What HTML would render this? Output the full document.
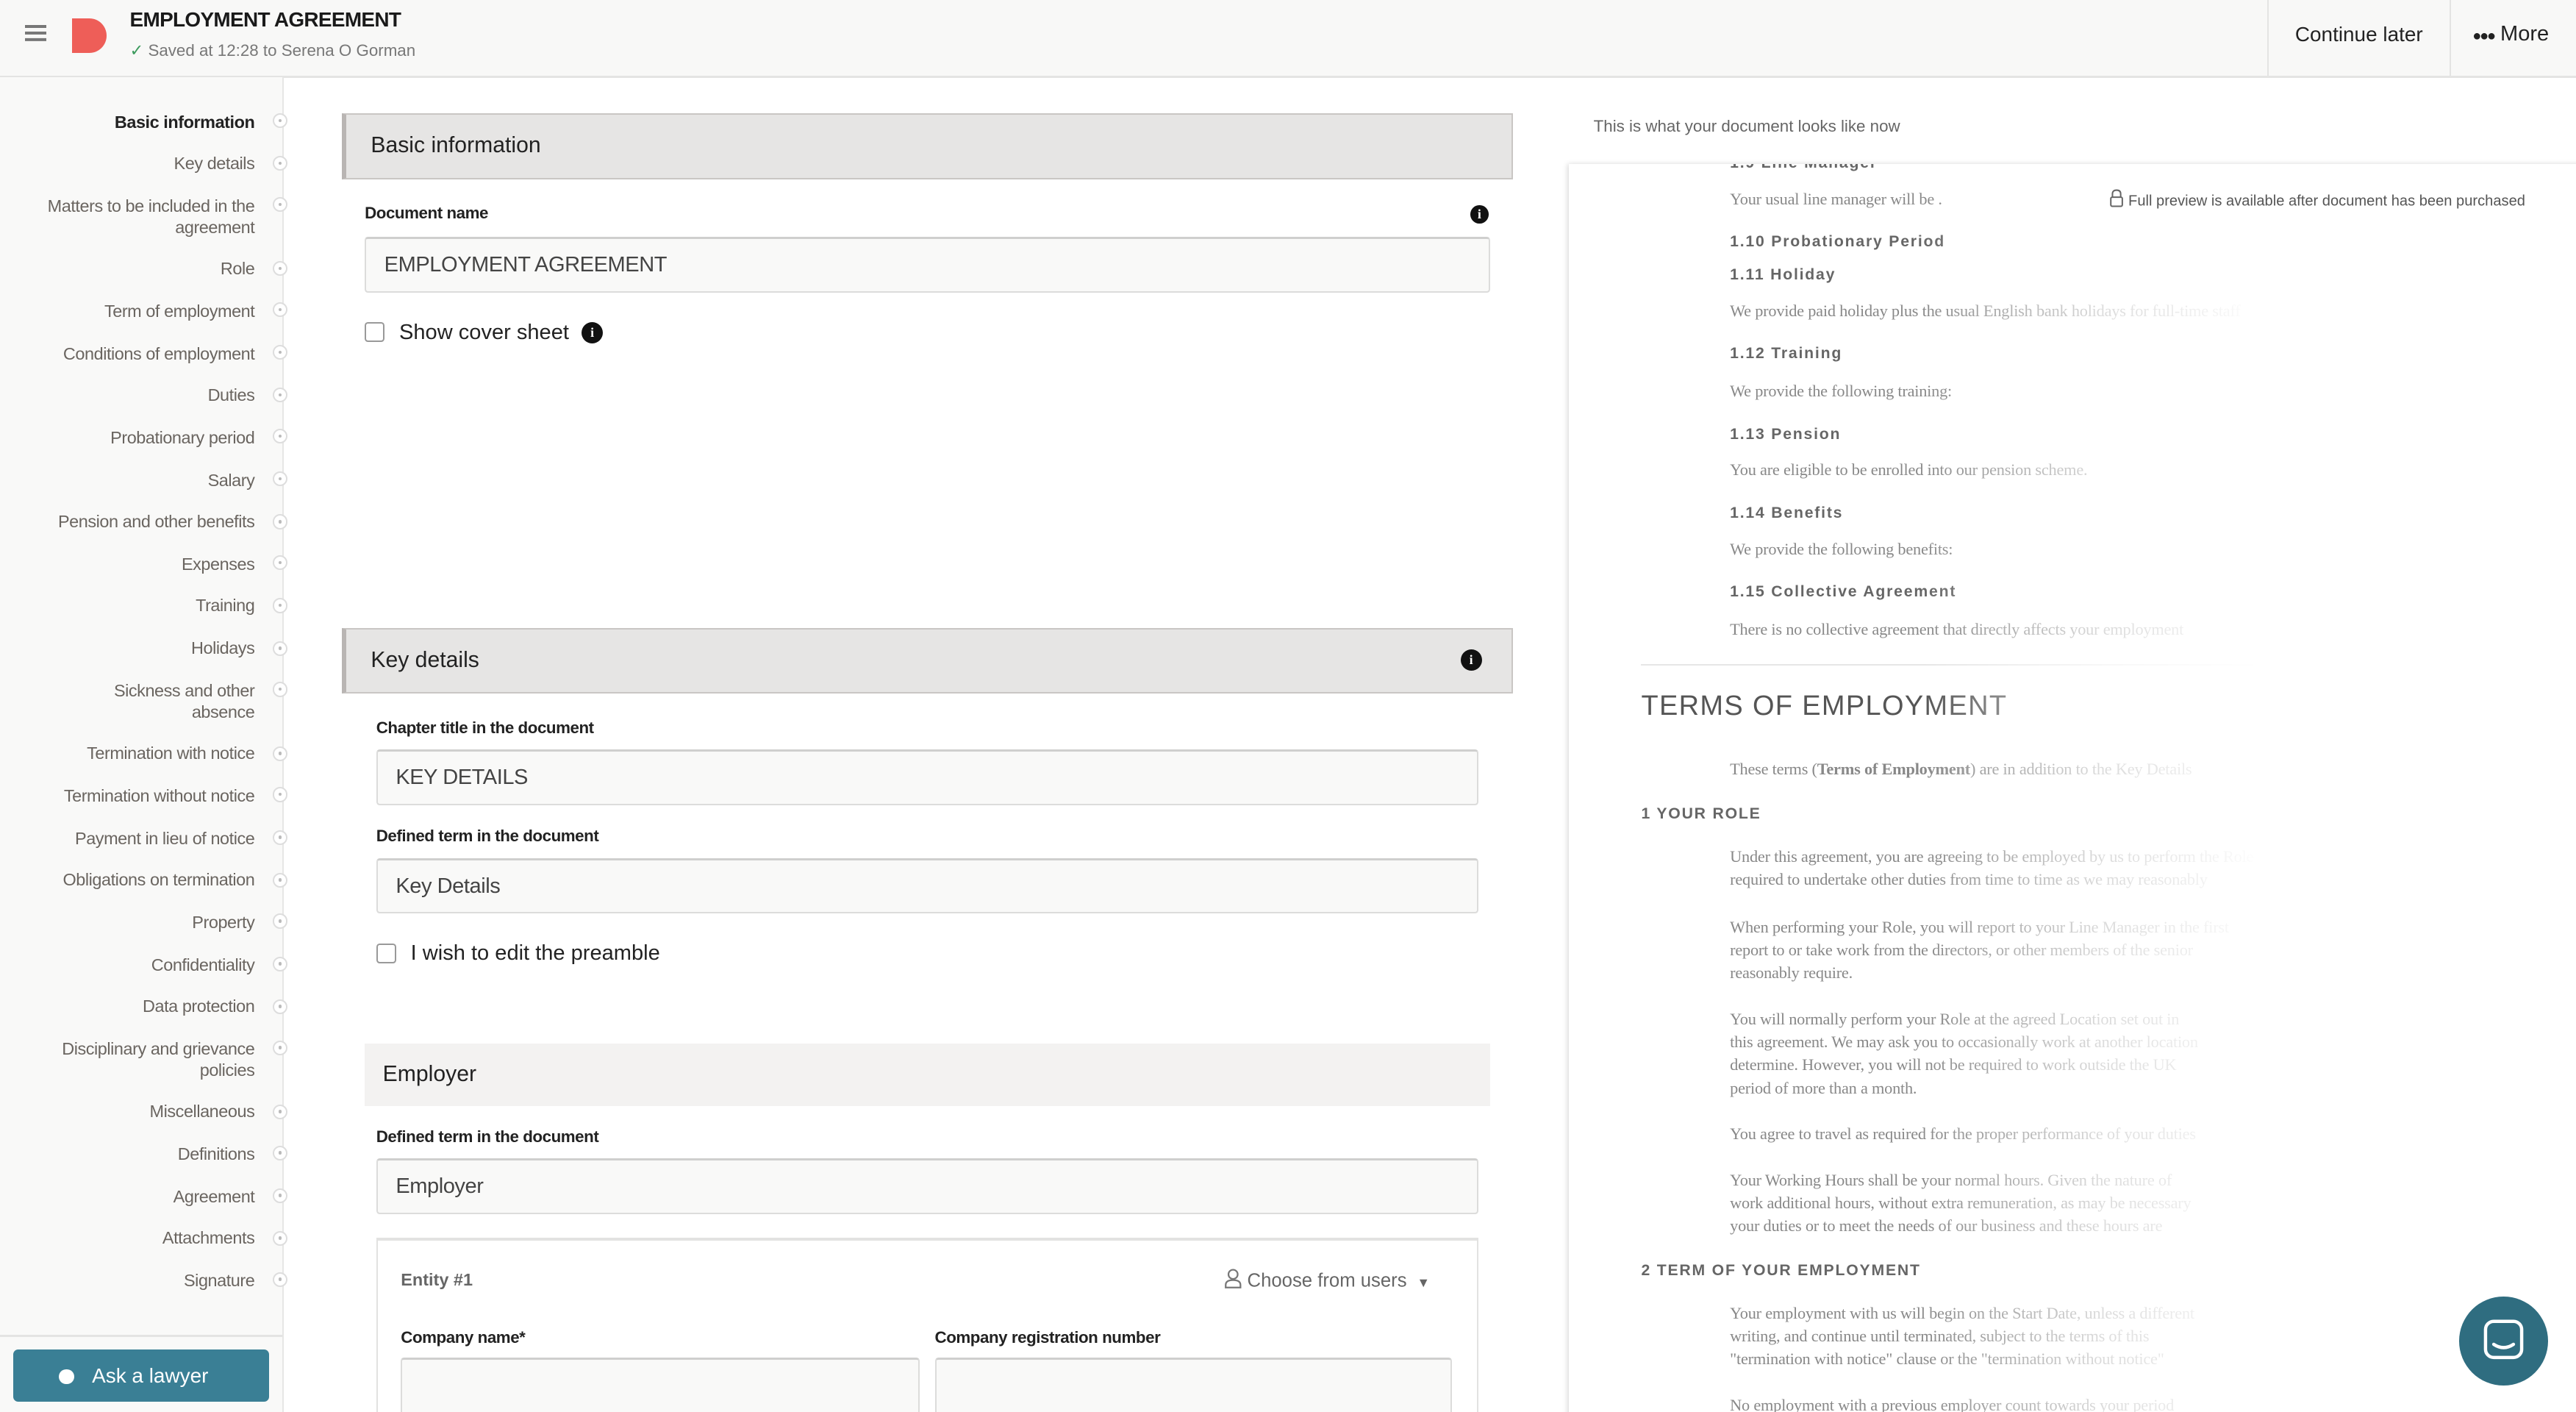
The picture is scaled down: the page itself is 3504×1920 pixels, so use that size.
<!DOCTYPE html>
<html><head><meta charset="utf-8">
<style>
html,body{margin:0;padding:0;}
body{width:3504px;height:1920px;overflow:hidden;background:#fff;font-family:"Liberation Sans",sans-serif;}
#root{position:relative;width:1568px;height:859.2px;zoom:2.2347;overflow:hidden;background:#fff;}
.a{position:absolute;}
.hdr{left:0;top:0;width:1568px;height:46px;background:#f8f8f7;border-bottom:1.5px solid #e4e4e3;}
.side{left:0;top:47px;width:172px;height:813px;background:#f9f9f8;border-right:1px solid #e6e6e5;}
.nav{position:absolute;left:22px;width:133px;text-align:right;font-size:10.5px;color:#6a6560;line-height:13px;letter-spacing:-0.2px;}
.dot{position:absolute;left:166px;width:9px;height:9px;border-radius:50%;border:1px solid #ddd;background:#fff;box-sizing:border-box;}
.dot:after{content:"";position:absolute;left:2.5px;top:2.5px;width:2px;height:2px;border-radius:50%;background:#bbb;}
.sec{background:#e6e5e4;border:1px solid #c9c6c4;border-left:3px solid #b9b5b3;box-sizing:border-box;font-size:13.5px;color:#222;padding-left:15px;}
.lbl{font-size:10px;font-weight:bold;color:#222;letter-spacing:-0.2px;}
.inp{background:#f9f9f8;border:1px solid #dcdcdb;border-top:1.5px solid #cfcfce;border-radius:2px;box-sizing:border-box;font-size:13px;color:#444;padding-left:11px;letter-spacing:-0.2px;}
.cb{width:12px;height:12px;border:1px solid #999;border-radius:2px;background:#fff;box-sizing:border-box;}
.info{width:11px;height:11px;border-radius:50%;background:#111;color:#fff;font-size:8px;font-weight:bold;text-align:center;line-height:11px;font-family:"Liberation Serif",serif;}
.doc{left:955px;top:100px;width:620px;height:780px;background:#fff;box-shadow:-1px 0 3px rgba(0,0,0,0.15);}
.fade{-webkit-mask-image:linear-gradient(to right,#000 0,#000 170px,rgba(0,0,0,0.3) 280px,rgba(0,0,0,0) 380px);mask-image:linear-gradient(to right,#000 0,#000 170px,rgba(0,0,0,0.3) 280px,rgba(0,0,0,0) 380px);}
.h{position:absolute;font-size:9.5px;font-weight:bold;color:#666;letter-spacing:0.8px;white-space:nowrap;}
.p{position:absolute;font-family:"Liberation Serif",serif;font-size:10px;color:#888;white-space:nowrap;line-height:14px;letter-spacing:-0.1px;}
</style></head><body><div id="root">
<div class="a hdr"></div>
<div class="a" style="left:15px;top:15px;width:13px;height:2px;background:#777;box-shadow:0 4px 0 #777,0 8px 0 #777;"></div>
<div class="a" style="left:44px;top:11px;width:21px;height:21px;background:#ee5e58;border-radius:0 11px 11px 0;"></div>
<div class="a" style="left:79px;top:5px;font-size:12.5px;font-weight:bold;color:#1a1a1a;letter-spacing:-0.3px;">EMPLOYMENT AGREEMENT</div>
<div class="a" style="left:79px;top:25px;font-size:10px;color:#777;"><span style="color:#3a9a5c">✓</span> Saved at 12:28 to Serena O Gorman</div>
<div class="a" style="left:1380px;top:0;width:110px;height:46px;border-left:1px solid #e4e4e3;border-right:1px solid #e4e4e3;font-size:12.5px;color:#222;text-align:center;line-height:42px;">Continue later</div>
<div class="a" style="left:1505px;top:0;height:46px;font-size:13px;color:#222;line-height:42px;"><span style="font-size:9px;letter-spacing:-1px;">●●●</span> More</div>

<div class="a side"></div>
<div class="nav" style="top:68px;font-weight:bold;color:#222;">Basic information</div><div class="dot a" style="top:69px"></div>
<div class="nav" style="top:93px">Key details</div><div class="dot a" style="top:95px"></div>
<div class="nav" style="top:119px">Matters to be included in the agreement</div><div class="dot a" style="top:120px"></div>
<div class="nav" style="top:157px">Role</div><div class="dot a" style="top:159px"></div>
<div class="nav" style="top:183px">Term of employment</div><div class="dot a" style="top:184px"></div>
<div class="nav" style="top:209px">Conditions of employment</div><div class="dot a" style="top:210px"></div>
<div class="nav" style="top:234px">Duties</div><div class="dot a" style="top:236px"></div>
<div class="nav" style="top:260px">Probationary period</div><div class="dot a" style="top:261px"></div>
<div class="nav" style="top:286px">Salary</div><div class="dot a" style="top:287px"></div>
<div class="nav" style="top:311px">Pension and other benefits</div><div class="dot a" style="top:313px"></div>
<div class="nav" style="top:337px">Expenses</div><div class="dot a" style="top:338px"></div>
<div class="nav" style="top:362px">Training</div><div class="dot a" style="top:364px"></div>
<div class="nav" style="top:388px">Holidays</div><div class="dot a" style="top:390px"></div>
<div class="nav" style="top:414px">Sickness and other<br>absence</div><div class="dot a" style="top:415px"></div>
<div class="nav" style="top:452px">Termination with notice</div><div class="dot a" style="top:454px"></div>
<div class="nav" style="top:478px">Termination without notice</div><div class="dot a" style="top:479px"></div>
<div class="nav" style="top:504px">Payment in lieu of notice</div><div class="dot a" style="top:505px"></div>
<div class="nav" style="top:529px">Obligations on termination</div><div class="dot a" style="top:531px"></div>
<div class="nav" style="top:555px">Property</div><div class="dot a" style="top:556px"></div>
<div class="nav" style="top:581px">Confidentiality</div><div class="dot a" style="top:582px"></div>
<div class="nav" style="top:606px">Data protection</div><div class="dot a" style="top:608px"></div>
<div class="nav" style="top:632px">Disciplinary and grievance<br>policies</div><div class="dot a" style="top:633px"></div>
<div class="nav" style="top:670px">Miscellaneous</div><div class="dot a" style="top:672px"></div>
<div class="nav" style="top:696px">Definitions</div><div class="dot a" style="top:697px"></div>
<div class="nav" style="top:722px">Agreement</div><div class="dot a" style="top:723px"></div>
<div class="nav" style="top:747px">Attachments</div><div class="dot a" style="top:749px"></div>
<div class="nav" style="top:773px">Signature</div><div class="dot a" style="top:774px"></div>
<div class="a" style="left:0;top:812px;width:172px;height:1.5px;background:#e4e4e3;"></div>
<div class="a" style="left:8px;top:821px;width:156px;height:32px;background:#3a7f95;border-radius:3px;color:#fff;font-size:12.5px;line-height:32px;"><span style="display:inline-block;width:9px;height:9px;border-radius:50%;background:#fff;margin:0 11px 0 28px;vertical-align:-1px;"></span>Ask a lawyer</div>

<div class="a sec" style="left:208px;top:69px;width:713px;height:40px;line-height:38px;">Basic information</div>
<div class="a lbl" style="left:222px;top:124px;">Document name</div>
<div class="a info" style="left:895px;top:125px;">i</div>
<div class="a inp" style="left:222px;top:144px;width:685px;height:34px;line-height:32px;">EMPLOYMENT AGREEMENT</div>
<div class="a cb" style="left:222px;top:196px;"></div>
<div class="a" style="left:243px;top:195px;font-size:13px;color:#222;">Show cover sheet</div>
<div class="a info" style="left:354px;top:196px;width:13px;height:13px;line-height:13px;">i</div>

<div class="a sec" style="left:208px;top:382px;width:713px;height:40px;line-height:38px;">Key details</div>
<div class="a info" style="left:889px;top:395px;width:13px;height:13px;line-height:13px;">i</div>
<div class="a lbl" style="left:229px;top:437px;">Chapter title in the document</div>
<div class="a inp" style="left:229px;top:456px;width:671px;height:34px;line-height:32px;">KEY DETAILS</div>
<div class="a lbl" style="left:229px;top:503px;">Defined term in the document</div>
<div class="a inp" style="left:229px;top:522px;width:671px;height:34px;line-height:32px;">Key Details</div>
<div class="a cb" style="left:229px;top:574px;"></div>
<div class="a" style="left:250px;top:573px;font-size:13px;color:#222;">I wish to edit the preamble</div>

<div class="a" style="left:222px;top:635px;width:685px;height:38px;background:#f3f2f1;font-size:13.5px;color:#222;line-height:38px;box-sizing:border-box;padding-left:11px;">Employer</div>
<div class="a lbl" style="left:229px;top:686px;">Defined term in the document</div>
<div class="a inp" style="left:229px;top:705px;width:671px;height:34px;line-height:32px;">Employer</div>
<div class="a" style="left:229px;top:753px;width:671px;height:120px;border:1px solid #e2e2e1;border-top:2px solid #e2e2e1;box-sizing:border-box;"></div>
<div class="a" style="left:244px;top:773px;font-size:10.5px;font-weight:bold;color:#666;">Entity #1</div>
<div class="a" style="left:745px;top:772px;font-size:11.5px;color:#666;"><svg width="11" height="12" viewBox="0 0 11 12" style="vertical-align:-1px"><circle cx="5.5" cy="3.5" r="2.8" fill="none" stroke="#777" stroke-width="1"/><path d="M1 11.5 V10 Q1 7 5.5 7 Q10 7 10 10 V11.5 Z" fill="none" stroke="#777" stroke-width="1"/></svg> Choose from users <span style="font-size:8px;margin-left:3px;">▼</span></div>
<div class="a lbl" style="left:244px;top:808px;">Company name*</div>
<div class="a lbl" style="left:569px;top:808px;">Company registration number</div>
<div class="a inp" style="left:244px;top:826px;width:316px;height:40px;"></div>
<div class="a inp" style="left:569px;top:826px;width:315px;height:40px;"></div>

<div class="a" style="left:970px;top:71px;font-size:10px;color:#666;">This is what your document looks like now</div>
<div class="a doc"></div>
<div class="a" style="left:1284px;top:115px;font-size:9px;color:#555;"><svg width="9" height="11" viewBox="0 0 9 11" style="vertical-align:-1px"><path d="M2 5 V3 Q2 0.7 4.5 0.7 Q7 0.7 7 3 V5" fill="none" stroke="#666" stroke-width="0.9"/><rect x="1" y="5" width="7" height="5.5" rx="0.8" fill="none" stroke="#666" stroke-width="0.9"/></svg> Full preview is available after document has been purchased</div>
<div class="a fade" style="left:999px;top:100px;width:400px;height:760px;overflow:hidden;">
<div class="h" style="left:54px;top:-6px;">1.9 Line Manager</div>
<div class="p" style="left:54px;top:14px;">Your usual line manager will be .</div>
<div class="h" style="left:54px;top:42px;">1.10 Probationary Period</div>
<div class="h" style="left:54px;top:62px;">1.11 Holiday</div>
<div class="p" style="left:54px;top:82px;">We provide paid holiday plus the usual English bank holidays for full-time staff</div>
<div class="h" style="left:54px;top:110px;">1.12 Training</div>
<div class="p" style="left:54px;top:131px;">We provide the following training:</div>
<div class="h" style="left:54px;top:159px;">1.13 Pension</div>
<div class="p" style="left:54px;top:179px;">You are eligible to be enrolled into our pension scheme.</div>
<div class="h" style="left:54px;top:207px;">1.14 Benefits</div>
<div class="p" style="left:54px;top:227px;">We provide the following benefits:</div>
<div class="h" style="left:54px;top:255px;">1.15 Collective Agreement</div>
<div class="p" style="left:54px;top:276px;">There is no collective agreement that directly affects your employment</div>
<div class="a" style="left:0;top:304px;width:400px;height:1px;background:#e6e6e6;"></div>
<div class="a" style="left:0;top:320px;font-size:17px;color:#555;letter-spacing:0.6px;white-space:nowrap;">TERMS OF EMPLOYMENT</div>
<div class="p" style="left:54px;top:361px;">These terms (<b>Terms of Employment</b>) are in addition to the Key Details</div>
<div class="h" style="left:0;top:390px;">1 YOUR ROLE</div>
<div class="p" style="left:54px;top:414px;">Under this agreement, you are agreeing to be employed by us to perform the Role<br>required to undertake other duties from time to time as we may reasonably</div>
<div class="p" style="left:54px;top:457px;">When performing your Role, you will report to your Line Manager in the first<br>report to or take work from the directors, or other members of the senior<br>reasonably require.</div>
<div class="p" style="left:54px;top:513px;">You will normally perform your Role at the agreed Location set out in<br>this agreement. We may ask you to occasionally work at another location<br>determine. However, you will not be required to work outside the UK<br>period of more than a month.</div>
<div class="p" style="left:54px;top:583px;">You agree to travel as required for the proper performance of your duties</div>
<div class="p" style="left:54px;top:611px;">Your Working Hours shall be your normal hours. Given the nature of<br>work additional hours, without extra remuneration, as may be necessary<br>your duties or to meet the needs of our business and these hours are</div>
<div class="h" style="left:0;top:668px;">2 TERM OF YOUR EMPLOYMENT</div>
<div class="p" style="left:54px;top:692px;">Your employment with us will begin on the Start Date, unless a different<br>writing, and continue until terminated, subject to the terms of this<br>"termination with notice" clause or the "termination without notice"</div>
<div class="p" style="left:54px;top:748px;">No employment with a previous employer count towards your period</div>
</div>
<div class="a" style="left:1497px;top:789px;width:54px;height:54px;border-radius:50%;background:#2f6d80;"></div>
<svg class="a" style="left:1509px;top:801px;" width="30" height="30" viewBox="0 0 30 30"><rect x="4" y="3" width="22" height="22" rx="5" fill="none" stroke="#fff" stroke-width="2"/><path d="M9 17 Q15 21 21 17" fill="none" stroke="#fff" stroke-width="2" stroke-linecap="round"/></svg>
</div></body></html>
